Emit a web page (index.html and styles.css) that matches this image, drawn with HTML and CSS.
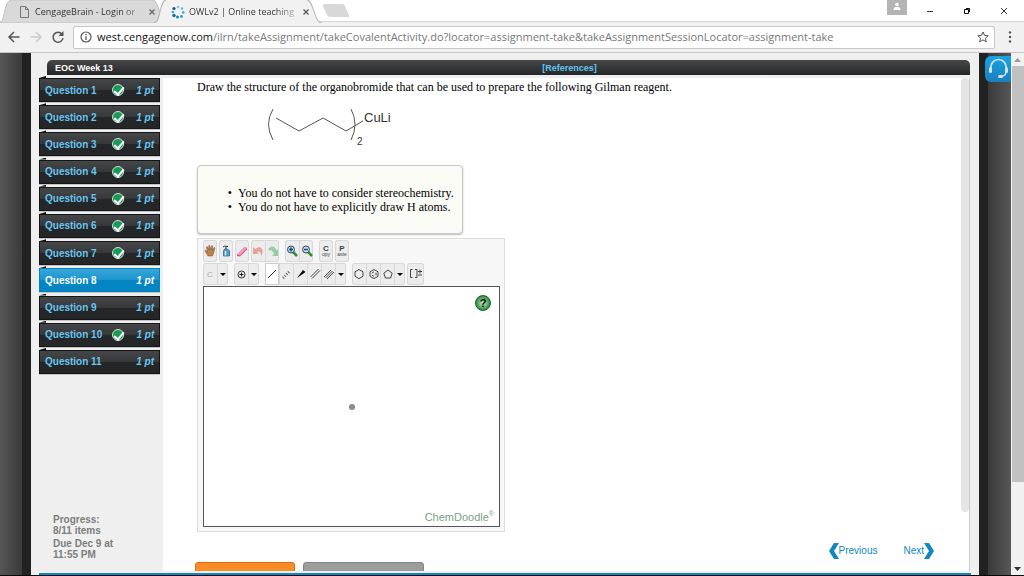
FILE: index.html
```
<!doctype html>
<html lang="en">
  <head>
    <meta charset="utf-8" />
    <meta name="viewport" content="width=device-width, initial-scale=1" />
    <title>OWLv2 | Online teaching</title>
    <link rel="stylesheet" href="styles.css">
  </head>
  <body>
    <!-- Browser tabs -->
    <div class="tabs">
      <div class="tab">
        <svg class="tab-shape" viewBox="0 0 166 22" preserveAspectRatio="none"><path d="M0 22C5 22 3 0 12 0H151C157 0 158 22 166 22Z" fill="#d9d9d9" stroke="#c4c4c4"/></svg>
        <svg class="tab-icon" width="14" height="14" viewBox="0 0 14 14"><path d="M3.500 1.500h5l3 3v8h-8zM8.500 1.500v3h3" fill="none" stroke="#777"/></svg>
        <span class="tab-title">CengageBrain - Login or</span>
        <button class="tab-close" aria-label="Close tab"><svg width="8" height="8" viewBox="0 0 8 8"><path d="M1.500 1.500l5 5M6.500 1.500l-5 5" stroke="#666" stroke-width="1.200"/></svg></button>
      </div>
      <div class="tab tab-active">
        <svg class="tab-shape" viewBox="0 0 166 22" preserveAspectRatio="none"><path d="M0 22C7 22 5 0 12 0H151C158 0 158 22 166 22Z" fill="#f1f1f1"/><path d="M0 22C7 22 5 0 12 0M151 0C158 0 158 22 166 22" fill="none" stroke="#b5b5b5"/></svg>
        <svg class="tab-icon" width="14" height="14" viewBox="0 0 14 14"><g fill="#2a9fd8"><circle cx="7" cy="2" r="1.300" fill="#7cc8ea"/><circle cx="11" cy="3.500" r="1.200" fill="#5bb9e4"/><circle cx="12.300" cy="7.500" r="1.300"/><circle cx="10.500" cy="11.500" r="1.400"/><circle cx="6.500" cy="12" r="1.500" fill="#1786c2"/><circle cx="3" cy="10.500" r="1.700" fill="#0e6ea8"/><circle cx="1.800" cy="7" r="1.200"/><circle cx="3" cy="3.500" r="1.600" fill="#115c8c"/></g></svg>
        <span class="tab-title">OWLv2 | Online teaching</span>
        <button class="tab-close" aria-label="Close tab"><svg width="8" height="8" viewBox="0 0 8 8"><path d="M1.500 1.500l5 5M6.500 1.500l-5 5" stroke="#555" stroke-width="1.200"/></svg></button>
      </div>
      <button class="new-tab" aria-label="New tab"><svg width="28" height="13" viewBox="0 0 28 13"><path d="M3 0H20Q22 0 23 2L27 11Q28 13 26 13H9Q6 13 5 11L1 2Q0 0 3 0Z" fill="#d8d8d8"/></svg></button>
      <div class="window-buttons">
        <button class="user" aria-label="User"><svg width="20" height="15" viewBox="0 0 20 15"><circle cx="10" cy="4.500" r="1.800" fill="#fff"/><path d="M6.500 10C6.500 7.500 8 7 10 7s3.500.5 3.500 3z" fill="#fff"/></svg></button>
        <button aria-label="Minimize"><svg width="8" height="8" viewBox="0 0 8 8"><path d="M1 4.500h6" stroke="#333"/></svg></button>
        <button aria-label="Restore"><svg width="8" height="8" viewBox="0 0 8 8"><path d="M1.500 2.500h4v4h-4zM3 1.500h3.500V5" fill="none" stroke="#111"/></svg></button>
        <button aria-label="Close"><svg width="8" height="8" viewBox="0 0 8 8"><path d="M1 1l6 6M7 1L1 7" stroke="#333"/></svg></button>
      </div>
    </div>

    <!-- Address bar -->
    <div class="toolbar">
      <button aria-label="Back"><svg width="14" height="14" viewBox="0 0 14 14"><path d="M12.500 7H2.500M7 2L2 7l5 5" fill="none" stroke="#555" stroke-width="1.500"/></svg></button>
      <button aria-label="Forward"><svg width="14" height="14" viewBox="0 0 14 14"><path d="M1.500 7h10M7 2l5 5-5 5" fill="none" stroke="#ccc" stroke-width="1.500"/></svg></button>
      <button aria-label="Reload"><svg width="14" height="14" viewBox="0 0 14 14"><path d="M11 4.200A5 5 0 1 0 12 8" fill="none" stroke="#555" stroke-width="1.500"/><path d="M12.500 1v5h-5z" fill="#555"/></svg></button>
      <div class="address">
        <svg width="12" height="12" viewBox="0 0 12 12"><circle cx="6" cy="6" r="5" fill="none" stroke="#555" stroke-width="1.200"/><path d="M6 5.300V9M6 3v1.300" stroke="#555" stroke-width="1.300"/></svg>
        <span class="url"><b>west.cengagenow.com</b>/ilrn/takeAssignment/takeCovalentActivity.do?locator=assignment-take&amp;takeAssignmentSessionLocator=assignment-take</span>
        <svg width="12" height="12" viewBox="0 0 12 12"><path d="M6 1l1.500 3.400 3.700.3-2.800 2.500.9 3.700L6 8.900l-3.300 2 .9-3.700L.800 4.700l3.700-.3z" fill="none" stroke="#555"/></svg>
      </div>
      <button class="menu" aria-label="Menu"><svg width="4" height="12" viewBox="0 0 4 12"><g fill="#555"><circle cx="2" cy="1.500" r="1.200"/><circle cx="2" cy="6" r="1.200"/><circle cx="2" cy="10.500" r="1.200"/></g></svg></button>
    </div>

    <div class="page">
      <div class="edge edge-left"></div>

      <div class="app">
        <div class="app-header">
          <h1>EOC Week 13</h1>
          <a href="#">[References]</a>
        </div>

        <div class="app-body">
          <nav class="sidebar">
            <ul class="questions">
              <li><a href="#">Question 1<i class="check"></i><em>1 pt</em></a></li>
              <li><a href="#">Question 2<i class="check"></i><em>1 pt</em></a></li>
              <li><a href="#">Question 3<i class="check"></i><em>1 pt</em></a></li>
              <li><a href="#">Question 4<i class="check"></i><em>1 pt</em></a></li>
              <li><a href="#">Question 5<i class="check"></i><em>1 pt</em></a></li>
              <li><a href="#">Question 6<i class="check"></i><em>1 pt</em></a></li>
              <li><a href="#">Question 7<i class="check"></i><em>1 pt</em></a></li>
              <li><a href="#" class="current">Question 8<em>1 pt</em></a></li>
              <li><a href="#">Question 9<em>1 pt</em></a></li>
              <li><a href="#">Question 10<i class="check"></i><em>1 pt</em></a></li>
              <li><a href="#">Question 11<em>1 pt</em></a></li>
            </ul>
            <div class="progress">
              <p>Progress:<br>8/11 items</p>
              <p>Due Dec 9 at<br>11:55 PM</p>
            </div>
          </nav>

          <main class="content">
            <p class="prompt">Draw the structure of the organobromide that can be used to prepare the following Gilman reagent.</p>
            <svg class="structure" width="130" height="44" viewBox="0 0 130 44">
              <g fill="none" stroke="#555">
                <path d="M9 5Q0 20 9 36M87 5Q95 20 87 36"/>
                <path d="M12 14L35 27 59 14 82 27 99 17"/>
              </g>
              <text x="100" y="18" font-size="13">CuLi</text>
              <text x="93" y="41" font-size="10">2</text>
            </svg>

            <div class="hints">
              <ul>
                <li>You do not have to consider stereochemistry.</li>
                <li>You do not have to explicitly draw H atoms.</li>
              </ul>
            </div>

            <div class="sketcher">
              <div class="tools">
                <div class="group"><button aria-label="Move"><svg width="12" height="14" viewBox="0 0 12 14"><path d="M4 12C3 10 1 8 1 6.500l1-.3L3.500 8 2.500 3l1-.3L5 6 4.800 1.500h1L6.700 6l.8-4.200h1L8.500 6.500 10 3.500l1 .3L9.500 9.500 8.500 12z" fill="#b98253" stroke="#7a4d28" stroke-width=".5"/></svg></button></div>
                <div class="group"><button aria-label="Clear"><svg width="12" height="14" viewBox="0 0 12 14"><path d="M4.500 5h3l2 2v5h-6V7z" fill="#4f9bd0" stroke="#245b81" stroke-width=".7"/><path d="M6 5V2.500M3 3Q4 1.500 8 2.500" fill="none" stroke="#333"/><path d="M5.500 7v4.500" stroke="#d9f0ff" stroke-width="1.500"/></svg></button></div>
                <div class="group"><button aria-label="Erase"><svg width="12" height="14" viewBox="0 0 12 14"><path d="M1 10.500L8.500 3l2.500 1v1.500L4 12.500l-3-.5z" fill="#c9517c"/><path d="M1 10.500L8.500 3l2.500 1L4 11.500z" fill="#f79abb"/></svg></button></div>
                <div class="group"><button disabled aria-label="Undo"><svg width="12" height="14" viewBox="0 0 12 14"><path d="M1 3v7h6L5 8C7.500 6.500 9 8 9 12.500 13 6 9 0 3.500 5z" fill="#dc5b4f"/></svg></button><button disabled aria-label="Redo"><svg width="12" height="14" viewBox="0 0 12 14"><path d="M11 5v7H5l2-2C6.500 7 4 5.500 1 6.500 2 1.500 8 1 9.500 6.500z" fill="#41b05a"/></svg></button></div>
                <div class="group group-gap"><button aria-label="Zoom in"><svg width="12" height="14" viewBox="0 0 12 14"><path d="M7 8l4 4" stroke="#318d39" stroke-width="2.500"/><circle cx="5" cy="5.500" r="3.500" fill="#b6ddf4" stroke="#444" stroke-width="1"/><path d="M3 5.500h4M5 3.500v4" stroke="#124b83" stroke-width="1.400"/></svg></button><button aria-label="Zoom out"><svg width="12" height="14" viewBox="0 0 12 14"><path d="M7 8l4 4" stroke="#318d39" stroke-width="2.500"/><circle cx="5" cy="5.500" r="3.500" fill="#b6ddf4" stroke="#444" stroke-width="1"/><path d="M3 5.500h4" stroke="#124b83" stroke-width="1.400"/></svg></button></div>
                <div class="group group-gap"><button class="word"><b>C</b>opy</button></div>
                <div class="group"><button class="word"><b>P</b>aste</button></div>
              </div>
              <div class="tools">
                <div class="group"><button disabled class="letter">C</button><button class="drop" aria-label="Elements"></button></div>
                <div class="group group-gap"><button aria-label="Charge"><svg width="12" height="14" viewBox="0 0 12 14"><circle cx="6.500" cy="7.500" r="3.500" fill="none" stroke="#333"/><path d="M4.500 7.500h4M6.500 5.500v4" stroke="#222"/></svg></button><button class="drop" aria-label="Charges"></button></div>
                <div class="group group-gap">
                  <button class="on" aria-label="Single bond"><svg width="12" height="14" viewBox="0 0 12 14"><path d="M2 11l8-8" stroke="#222"/></svg></button>
                  <button aria-label="Recessed bond"><svg width="12" height="14" viewBox="0 0 12 14"><path d="M2 11l7-7" stroke="#555" stroke-width="2.500" stroke-dasharray="1 1.500"/></svg></button>
                  <button aria-label="Protruding bond"><svg width="12" height="14" viewBox="0 0 12 14"><path d="M2 11L8 3l2.500 2z" fill="#000"/></svg></button>
                  <button aria-label="Double bond"><svg width="12" height="14" viewBox="0 0 12 14"><path d="M1.500 10l8-8M3 11.500l8-8" stroke="#444"/></svg></button>
                  <button aria-label="Triple bond"><svg width="12" height="14" viewBox="0 0 12 14"><path d="M1 10l7-7M2.500 11l7-7M4 12l7-7" stroke="#444"/></svg></button>
                  <button class="drop" aria-label="Bonds"></button>
                </div>
                <div class="group group-gap">
                  <button aria-label="Cyclohexane ring"><svg width="12" height="14" viewBox="0 0 12 14"><path d="M6 2.500l4 2.300v4.500l-4 2.300-4-2.300V4.800z" fill="none" stroke="#444"/></svg></button>
                  <button aria-label="Benzene ring"><svg width="12" height="14" viewBox="0 0 12 14"><path d="M6 2.500l4 2.300v4.500l-4 2.300-4-2.300V4.800zM6 4.800L4 6M4 8.200l2 1.200M8 5.800v2.500" fill="none" stroke="#444"/></svg></button>
                  <button aria-label="Cyclopentane ring"><svg width="12" height="14" viewBox="0 0 12 14"><path d="M6 3l4.200 3.200-1.600 4.800H3.400L1.800 6.200z" fill="none" stroke="#444"/></svg></button>
                  <button class="drop" aria-label="Rings"></button>
                </div>
                <div class="group"><button class="bracket" aria-label="Brackets"><svg width="12" height="14" viewBox="0 0 12 14"><path d="M2.500 2.500h-2v8h2M5 2.500h2v8H5M8 4.500h4M10 2.500v4M8 8h4" fill="none" stroke="#444"/></svg></button></div>
              </div>
              <div class="canvas">
                <button class="help" aria-label="Help">?</button>
                <span class="atom"></span>
                <span class="brand">ChemDoodle<sup>®</sup></span>
              </div>
            </div>

            <div class="pager">
              <a href="#"><svg width="10" height="16" viewBox="0 0 10 16"><path d="M5 0h5L5 8l5 8H5L0 8z"/></svg>Previous</a>
              <a href="#">Next<svg width="10" height="16" viewBox="0 0 10 16"><path d="M5 0H0l5 8-5 8h5l5-8z"/></svg></a>
            </div>
            <div class="actions">
              <button class="action-check" aria-label="Check answer"></button>
              <button class="action-save" aria-label="Save and exit"></button>
            </div>
            <div class="inner-scroll"></div>
          </main>
        </div>
        <div class="app-footer"></div>
      </div>

      <div class="edge edge-right">
        <button class="support" aria-label="Support"><svg width="25" height="26" viewBox="0 0 25 26"><g fill="none" stroke="#d5e3ea"><path d="M5 14C3 0 22 0 20 14" stroke-width="1.700"/><path d="M20 16c0 3-2 4-5 4.500" stroke-width="1.300"/></g><g fill="#d5e3ea"><rect x="3" y="11" width="3" height="6" rx="1.500"/><rect x="19" y="11" width="3" height="6" rx="1.500"/><rect x="12" y="19" width="5" height="3" rx="1.500"/></g></svg></button>
      </div>
      <div class="scrollbar">
        <svg width="7" height="4" viewBox="0 0 7 4"><path d="M0 4l3.500-4L7 4z" fill="#999"/></svg>
        <div class="thumb"></div>
        <svg width="7" height="4" viewBox="0 0 7 4"><path d="M0 0l3.500 4L7 0z" fill="#333"/></svg>
      </div>
    </div>
  </body>
</html>
```
FILE: styles.css
```
* {
  box-sizing: border-box;
}

body {
  margin: 0;
  height: 100vh;
  display: flex;
  flex-direction: column;
  overflow: hidden;
  border-bottom: 1px solid #05090c;
  background: #fff;
  font-family: "Liberation Sans", Arial, sans-serif;
}

button {
  padding: 0;
  border: none;
  background: none;
  display: flex;
  align-items: center;
  justify-content: center;
  font-family: inherit;
}

a {
  text-decoration: none;
}

p,
ul,
h1 {
  margin: 0;
  padding: 0;
}

svg {
  flex: none;
  display: block;
}

/* Browser chrome */
.tabs {
  display: flex;
  flex: none;
  height: 22px;
  border-bottom: 1px solid #d4d4d4;
  font-family: "Open Sans", "Segoe UI", sans-serif;
}

.tab {
  position: relative;
  z-index: 0;
  display: flex;
  align-items: center;
  width: 168px;
  height: 23px;
  padding: 0 10px 0 17px;
}

.tab-active {
  z-index: 1;
  margin-left: -14px;
}

.tab-shape {
  position: absolute;
  inset: 0;
  width: 100%;
  height: 100%;
  z-index: -1;
}

.tab-title {
  flex: 1;
  margin-left: 4px;
  overflow: hidden;
  white-space: nowrap;
  font-size: 9px;
  line-height: 16px;
  color: #333;
  -webkit-mask-image: linear-gradient(90deg, #000 80%, rgba(0, 0, 0, 0.3));
  mask-image: linear-gradient(90deg, #000 80%, rgba(0, 0, 0, 0.3));
}

.tab-close {
  width: 8px;
  margin: 0 2px 0 6px;
}

.new-tab {
  align-self: center;
}

.window-buttons {
  display: flex;
  margin-left: auto;
  gap: 20px;
  padding-right: 12px;
}

.window-buttons button {
  width: 17px;
}

.window-buttons .user {
  width: 20px;
  height: 15px;
  margin-right: -6px;
  background: #b4b4b4;
}

.toolbar {
  display: flex;
  flex: none;
  align-items: center;
  gap: 8px;
  height: 31px;
  padding: 0 12px 0 7px;
  background: #f1f1f1;
  border-bottom: 1px solid #c6c6c6;
}

.address {
  flex: 1;
  display: flex;
  align-items: center;
  gap: 5px;
  min-width: 0;
  height: 23px;
  padding: 0 5px 0 6px;
  background: #fff;
  border: 1px solid #c8c8c8;
  border-radius: 2px;
}

.url {
  flex: 1;
  overflow: hidden;
  white-space: nowrap;
  font-family: "Open Sans", "Segoe UI", sans-serif;
  font-size: 11px;
  line-height: 20px;
  color: #777;
}

.url b {
  font-weight: 400;
  color: #111;
}

.menu {
  margin-left: 5px;
}

/* Page frame */
.page {
  flex: 1;
  display: flex;
  min-height: 0;
}

.edge {
  flex: none;
}

.edge-left {
  width: 31px;
  background: linear-gradient(90deg, #575757, #3a3a3a 22px, #222 22px);
}

.edge-right {
  width: 32px;
  padding: 3px 0 0 6px;
  background: linear-gradient(90deg, #222 9px, #3a3a3a 9px, #575757);
}

.support {
  width: 26px;
  height: 26px;
  border-radius: 6px 0 0 6px;
  background: linear-gradient(#17a5e6, #1a80ba);
}

.scrollbar {
  flex: none;
  width: 13px;
  display: flex;
  flex-direction: column;
  align-items: center;
  padding: 5px 0 4px;
  background: #f1f1f1;
}

.thumb {
  flex: none;
  width: 12px;
  height: 81%;
  margin: 4px 0 auto;
  background: #c1c1c1;
}

.app {
  flex: 1;
  min-width: 0;
  display: flex;
  flex-direction: column;
  padding: 7px 8px 0;
  background: #efefef;
}

.app-header {
  flex: none;
  display: grid;
  grid-template-columns: 114px 1fr;
  align-items: center;
  height: 15px;
  margin: 0 1px 3px 8px;
  padding-left: 8px;
  border-radius: 5px 5px 0 0;
  background: linear-gradient(#454748, #242627);
  font-size: 9px;
  font-weight: bold;
}

.app-header h1 {
  font-size: 9px;
  color: #fff;
}

.app-header a {
  justify-self: center;
  color: #62c8f5;
}

.app-body {
  flex: 1;
  min-height: 0;
  display: flex;
}

.app-footer {
  flex: none;
  height: 4px;
  border-bottom: 2px solid #0f87c2;
}

/* Question list */
.sidebar {
  flex: none;
  width: 124px;
  display: flex;
  flex-direction: column;
}

.questions {
  display: flex;
  flex-direction: column;
  justify-content: space-between;
  width: 121px;
  height: 296px;
  list-style: none;
}

.questions a {
  position: relative;
  display: grid;
  grid-template-columns: 1fr auto 32px;
  align-items: center;
  gap: 10px;
  height: 24px;
  padding: 0 5px;
  border: 1px solid #141516;
  background: linear-gradient(#444647, #36383a 50%, #242628 50%, #242628);
  box-shadow: 0 1px 0 #c4c4c4;
  font-size: 10px;
  font-weight: bold;
  white-space: nowrap;
  color: #68c6f2;
}

.questions a::before {
  content: "";
  position: absolute;
  left: -1px;
  top: -3px;
  width: 7px;
  height: 2px;
  background: #111;
  clip-path: polygon(0 100%, 100% 0, 100% 100%);
}

.questions em {
  grid-column: 3;
  text-align: right;
}

.questions .current {
  border-color: #0584bd;
  background: linear-gradient(#38a6d8, #1c95cf 50%, #0486c5 50%, #0486c5);
  color: #fff;
}

.check {
  position: relative;
  width: 12px;
  height: 12px;
  margin-right: -14px;
  border: 1px solid #ddd;
  border-radius: 50%;
  background: #169b55;
}

.check::after {
  content: "";
  position: absolute;
  left: 3px;
  top: 0;
  width: 4px;
  height: 8px;
  border: solid #fff;
  border-width: 0 2px 2px 0;
  transform: rotate(40deg);
}

.progress {
  margin-top: auto;
  padding: 0 0 11px 14px;
  font-size: 10px;
  font-weight: bold;
  line-height: 11px;
  color: #7d7d7d;
}

.progress p + p {
  margin-top: 2px;
}

/* Question */
.content {
  position: relative;
  flex: 1;
  min-width: 0;
  overflow: hidden;
  margin-right: 1px;
  padding-left: 34px;
  background: #fff;
  border-right: 1px solid #ccc;
}

.prompt {
  padding-top: 1px;
  font-family: "Liberation Serif", "Times New Roman", serif;
  font-size: 12px;
  line-height: 16px;
}

.structure {
  margin: 9px 0 0 67px;
  fill: #333;
}

.hints {
  width: 266px;
  margin-top: 17px;
  padding: 20px 0 19px 40px;
  border: 1px solid #c9c9c4;
  border-radius: 4px;
  background: #fafbf5;
  box-shadow: 0 1px 2px #bbb;
  font-family: "Liberation Serif", "Times New Roman", serif;
  font-size: 12px;
  line-height: 14px;
}

.hints ul {
  list-style-type: "•\00a0\00a0";
}

.hints li {
  white-space: nowrap;
}

/* Sketcher */
.sketcher {
  width: 308px;
  margin-top: 4px;
  padding: 1px 4px 4px 5px;
  border: 1px solid #ddd;
  background: #f7f7f7;
}

.tools {
  display: flex;
  gap: 2px;
  margin-bottom: 1px;
}

.group {
  display: flex;
  height: 22px;
  border-radius: 3px;
  background: #ececec;
  box-shadow: inset 0 0 0 1px #d8d8d8;
}

.group-gap {
  margin-left: 4px;
}

.group button {
  width: 14px;
}

.group button + button {
  border-left: 1px solid #d8d8d8;
}

.group button:disabled svg {
  opacity: 0.5;
}

.group .on {
  background: #fff;
  border: 1px solid #ccc;
}

.group .word {
  flex-direction: column;
  font-size: 5px;
  line-height: 5px;
  color: #444;
}

.word b {
  font-size: 8px;
  line-height: 7px;
}

.group .letter {
  font-size: 8px;
  color: #aaa;
}

.group .drop {
  width: 11px;
}

.drop::after {
  content: "";
  border: 3px solid transparent;
  border-top-color: #000;
  border-bottom: 0;
}

.group .bracket {
  width: 16px;
  margin-left: 1px;
}

.canvas {
  position: relative;
  height: 241px;
  background: #fff;
  border: 1px solid #555;
}

.help {
  position: absolute;
  top: 8px;
  right: 8px;
  width: 16px;
  height: 16px;
  border: 1px solid #146c26;
  border-radius: 50%;
  background: radial-gradient(#d5eed6, #2c8b3c 70%);
  font-size: 11px;
  font-weight: bold;
}

.atom {
  position: absolute;
  left: 50%;
  top: 50%;
  width: 6px;
  height: 6px;
  margin: -3px;
  border-radius: 50%;
  background: #888;
}

.brand {
  position: absolute;
  right: 5px;
  bottom: 2px;
  font-size: 11px;
  line-height: 14px;
  color: #7d9f7f;
}

.brand sup {
  font-size: 7px;
  line-height: 7px;
}

.pager {
  display: flex;
  justify-content: flex-end;
  gap: 26px;
  margin: 11px 35px 3px 0;
}

.pager a {
  display: flex;
  align-items: center;
  font-size: 10px;
  line-height: 16px;
  color: #0f87c2;
}

.pager svg {
  fill: #0f87c2;
}

.actions {
  display: flex;
  gap: 8px;
  margin-left: -2px;
}

.actions button {
  height: 22px;
  border-radius: 3px;
}

.action-check {
  width: 100px;
  border: 1px solid #e06a12;
  background: #fb8c28;
}

.action-save {
  width: 121px;
  border: 1px solid #858585;
  background: #9c9c9c;
}

.inner-scroll {
  position: absolute;
  top: 0;
  right: 0;
  width: 8px;
  height: 88%;
  border-radius: 4px;
  background: #e5e5e5;
}
```
